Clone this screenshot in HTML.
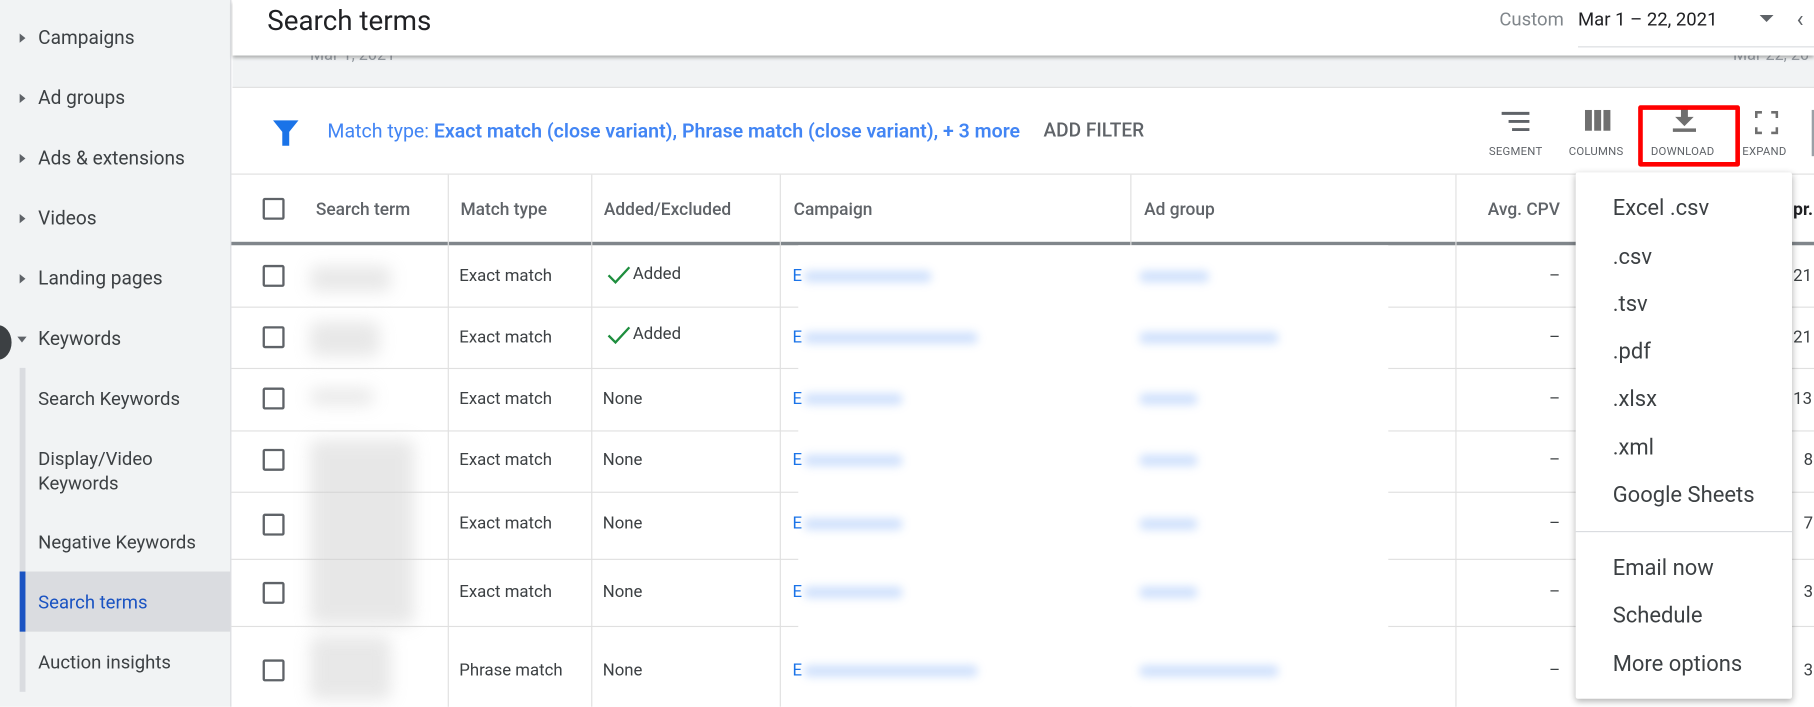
<!DOCTYPE html>
<html><head><meta charset="utf-8"><style>
*{box-sizing:border-box;margin:0;padding:0}
body{width:1814px;height:707px;overflow:hidden;background:#fff;font-family:Roboto,"Liberation Sans",Arial,sans-serif;}
#w{position:absolute;left:0;top:0;width:1568px;height:611px;transform:scale(1.15689);transform-origin:0 0;background:#fff;overflow:hidden}
.a{position:absolute}
.side{left:0;top:0;width:200px;height:611px;background:#f1f3f4;border-right:1px solid #dadce0}
.nav{position:absolute;left:33px;font-size:16.5px;color:#3c4043}
.tri{position:absolute;left:17px;width:0;height:0;border-top:4px solid transparent;border-bottom:4px solid transparent;border-left:5px solid #5f6368}
.sub{position:absolute;left:33px;font-size:16px;color:#3c4043;line-height:21px}
.t{position:absolute;font-size:14.5px;color:#3c4043}
.hd{position:absolute;font-size:15px;color:#5f6368;font-weight:500}
.cb{position:absolute;left:227px;width:19px;height:19px;border:2px solid #5f6368;border-radius:2px}
.hl{position:absolute;left:200px;width:1368px;height:1px;background:#e0e0e0}
.vl{position:absolute;top:151px;width:1px;height:460px;background:#e0e0e0}
.blur{position:absolute;background:#ccc;filter:blur(7px);border-radius:6px;opacity:.45}
.bl{position:absolute;background:#8ab4f8;filter:blur(4px);opacity:.4;height:10px;border-radius:4px}
.mi{position:absolute;left:1394px;font-size:19px;color:#3c4043}
.ic{position:absolute;font-size:9.8px;color:#5f6368;letter-spacing:.2px}
</style></head><body><div id="w">
<div class="a side"></div>
<div class="tri" style="top:29px"></div><div class="nav" style="top:24px">Campaigns</div>
<div class="tri" style="top:81px"></div><div class="nav" style="top:76px">Ad groups</div>
<div class="tri" style="top:133px"></div><div class="nav" style="top:128px">Ads &amp; extensions</div>
<div class="tri" style="top:185px"></div><div class="nav" style="top:180px">Videos</div>
<div class="tri" style="top:237px"></div><div class="nav" style="top:232px">Landing pages</div>
<div class="a" style="left:15px;top:291px;border-left:4px solid transparent;border-right:4px solid transparent;border-top:5px solid #5f6368"></div>
<div class="nav" style="top:284px">Keywords</div>
<div class="a" style="left:-14px;top:281px;width:24px;height:30px;border-radius:50%;background:#3c4043"></div>
<div class="a" style="left:17px;top:318px;width:5px;height:280px;background:#dadce0"></div>
<div class="sub" style="top:334px">Search Keywords</div>
<div class="sub" style="top:386px">Display/Video<br>Keywords</div>
<div class="sub" style="top:458px">Negative Keywords</div>
<div class="a" style="left:17px;top:494px;width:182px;height:52px;background:#dadce0;border-left:5px solid #1a53c2"></div>
<div class="sub" style="top:510px;color:#1a53c2">Search terms</div>
<div class="sub" style="top:562px">Auction insights</div>

<div class="a" style="left:201px;top:48px;width:1367px;height:28px;background:#f1f3f4;border-bottom:1px solid #e0e0e0"></div>
<div class="a" style="left:268px;top:40px;font-size:14px;color:#9aa0a6">Mar 1, 2021</div>
<div class="a" style="left:1498px;top:40px;font-size:14px;color:#9aa0a6">Mar 22, 20</div>
<div class="a" style="left:201px;top:0;width:1367px;height:48px;background:#fff;box-shadow:0 2px 3px rgba(0,0,0,.3)"></div>
<div class="a" style="left:231px;top:4px;font-size:24px;color:#202124">Search terms</div>
<div class="a" style="left:1296px;top:7px;font-size:16px;color:#80868b">Custom</div>
<div class="a" style="left:1364px;top:7px;font-size:16px;color:#202124">Mar 1 – 22, 2021</div>
<div class="a" style="left:1364px;top:40px;width:207px;height:1px;background:#dadce0"></div>
<div class="a" style="left:1521px;top:13px;border-left:6px solid transparent;border-right:6px solid transparent;border-top:6px solid #5f6368"></div>
<div class="a" style="left:1553px;top:4px;font-size:20px;color:#5f6368">‹</div>

<svg class="a" style="left:235px;top:103px" width="24" height="24" viewBox="0 0 24 24"><path d="M1 1h22l-8 10v12h-6V11z" fill="#1a73e8"/></svg>
<div class="a" style="left:283px;top:104px;font-size:16.9px;color:#4285f4">Match type: <b style="font-weight:600">Exact match (close variant), Phrase match (close variant), + 3 more</b></div>
<div class="a" style="left:902px;top:104px;font-size:16.5px;color:#5f6368;font-weight:500">ADD FILTER</div>

<svg class="a" style="left:1297px;top:95px" width="26" height="22" viewBox="0 0 26 22"><path d="M1 3h24M7 10h18M10 17h15" stroke="#5f6368" stroke-width="2.5"/></svg>
<div class="ic" style="left:1287px;top:126px">SEGMENT</div>
<svg class="a" style="left:1370px;top:95px" width="24" height="20"><rect x="0" y="0" width="6" height="18" fill="#6f6f6f"/><rect x="8" y="0" width="6" height="18" fill="#6f6f6f"/><rect x="16" y="0" width="6" height="18" fill="#6f6f6f"/></svg>
<div class="ic" style="left:1356px;top:126px">COLUMNS</div>
<svg class="a" style="left:1445px;top:94px" width="24" height="22"><path d="M8 0h6v7h5l-8 8-8-8h5z" fill="#6f6f6f"/><rect x="1" y="17" width="20" height="3" fill="#6f6f6f"/></svg>
<div class="ic" style="left:1427px;top:126px">DOWNLOAD</div>
<div class="a" style="left:1416px;top:91px;width:88px;height:53px;border:4px solid #f00;border-radius:2px"></div>
<svg class="a" style="left:1517px;top:96px" width="20" height="20"><path d="M1 6V1h5M14 1h5v5M19 14v5h-5M6 19H1v-5" stroke="#6f6f6f" stroke-width="2.4" fill="none"/></svg>
<div class="ic" style="left:1506px;top:126px">EXPAND</div>
<div class="a" style="left:1566px;top:95px;width:2px;height:40px;background:#9aa0a6"></div>

<div class="hl" style="top:150px"></div>
<div class="a" style="left:200px;top:209px;width:1368px;height:3px;background:#80868b"></div>
<div class="hl" style="top:265px"></div><div class="hl" style="top:318px"></div><div class="hl" style="top:372px"></div><div class="hl" style="top:425px"></div><div class="hl" style="top:483px"></div><div class="hl" style="top:541px"></div>
<div class="vl" style="left:387px"></div><div class="vl" style="left:511px"></div><div class="vl" style="left:674px"></div><div class="vl" style="left:977px"></div><div class="vl" style="left:1258px"></div>

<div class="cb" style="top:171px"></div>
<div class="hd" style="left:273px;top:172px">Search term</div>
<div class="hd" style="left:398px;top:172px">Match type</div>
<div class="hd" style="left:522px;top:172px">Added/Excluded</div>
<div class="hd" style="left:686px;top:172px">Campaign</div>
<div class="hd" style="left:989px;top:172px">Ad group</div>
<div class="hd" style="left:1286px;top:172px">Avg. CPV</div>
<div class="hd" style="left:1550px;top:172px;color:#202124;font-weight:700">pr.</div>

<div class="cb" style="top:229px"></div><div class="cb" style="top:282px"></div><div class="cb" style="top:335px"></div><div class="cb" style="top:388px"></div><div class="cb" style="top:444px"></div><div class="cb" style="top:503px"></div><div class="cb" style="top:570px"></div>
<div class="blur" style="left:268px;top:230px;width:70px;height:22px"></div>
<div class="blur" style="left:268px;top:278px;width:60px;height:30px"></div>
<div class="blur" style="left:268px;top:336px;width:55px;height:14px"></div>
<div class="blur" style="left:268px;top:380px;width:90px;height:160px"></div>
<div class="blur" style="left:268px;top:550px;width:70px;height:55px"></div>

<div class="t" style="left:397px;top:230px">Exact match</div>
<div class="t" style="left:397px;top:283px">Exact match</div>
<div class="t" style="left:397px;top:336px">Exact match</div>
<div class="t" style="left:397px;top:389px">Exact match</div>
<div class="t" style="left:397px;top:444px">Exact match</div>
<div class="t" style="left:397px;top:503px">Exact match</div>
<div class="t" style="left:397px;top:571px">Phrase match</div>
<svg class="a" style="left:525px;top:230px" width="20" height="16"><path d="M1 8l6 6L19 1" stroke="#1e8e3e" stroke-width="2" fill="none"/></svg>
<div class="t" style="left:547px;top:228px">Added</div>
<svg class="a" style="left:525px;top:282px" width="20" height="16"><path d="M1 8l6 6L19 1" stroke="#1e8e3e" stroke-width="2" fill="none"/></svg>
<div class="t" style="left:547px;top:280px">Added</div>
<div class="t" style="left:521px;top:336px">None</div><div class="t" style="left:521px;top:389px">None</div><div class="t" style="left:521px;top:444px">None</div><div class="t" style="left:521px;top:503px">None</div><div class="t" style="left:521px;top:571px">None</div>

<div class="a" style="left:690px;top:212px;width:510px;height:399px;background:#fff"></div>
<div class="t" style="left:685px;top:230px;color:#1a73e8">E</div><div class="t" style="left:685px;top:283px;color:#1a73e8">E</div><div class="t" style="left:685px;top:336px;color:#1a73e8">E</div><div class="t" style="left:685px;top:389px;color:#1a73e8">E</div><div class="t" style="left:685px;top:444px;color:#1a73e8">E</div><div class="t" style="left:685px;top:503px;color:#1a73e8">E</div><div class="t" style="left:685px;top:571px;color:#1a73e8">E</div>
<div class="bl" style="left:695px;top:234px;width:110px"></div><div class="bl" style="left:695px;top:287px;width:150px"></div><div class="bl" style="left:695px;top:340px;width:85px"></div><div class="bl" style="left:695px;top:393px;width:85px"></div><div class="bl" style="left:695px;top:448px;width:85px"></div><div class="bl" style="left:695px;top:507px;width:85px"></div><div class="bl" style="left:695px;top:575px;width:150px"></div>
<div class="bl" style="left:985px;top:234px;width:60px"></div><div class="bl" style="left:985px;top:287px;width:120px"></div><div class="bl" style="left:985px;top:340px;width:50px"></div><div class="bl" style="left:985px;top:393px;width:50px"></div><div class="bl" style="left:985px;top:448px;width:50px"></div><div class="bl" style="left:985px;top:507px;width:50px"></div><div class="bl" style="left:985px;top:575px;width:120px"></div>

<div class="t" style="left:1339px;top:230px">–</div><div class="t" style="left:1339px;top:283px">–</div><div class="t" style="left:1339px;top:336px">–</div><div class="t" style="left:1339px;top:389px">–</div><div class="t" style="left:1339px;top:444px">–</div><div class="t" style="left:1339px;top:503px">–</div><div class="t" style="left:1339px;top:571px">–</div>
<div class="t" style="left:1550px;top:230px">21</div><div class="t" style="left:1550px;top:283px">21</div><div class="t" style="left:1550px;top:336px">13</div><div class="t" style="left:1559px;top:389px">8</div><div class="t" style="left:1559px;top:444px">7</div><div class="t" style="left:1559px;top:503px">3</div><div class="t" style="left:1559px;top:571px">3</div>

<div class="a" style="left:1362px;top:149px;width:187px;height:455px;background:#fff;box-shadow:0 2px 6px rgba(0,0,0,.3);border-radius:2px"></div>
<div class="mi" style="top:168px">Excel .csv</div>
<div class="mi" style="top:210px">.csv</div>
<div class="mi" style="top:251px">.tsv</div>
<div class="mi" style="top:292px">.pdf</div>
<div class="mi" style="top:333px">.xlsx</div>
<div class="mi" style="top:375px">.xml</div>
<div class="mi" style="top:416px">Google Sheets</div>
<div class="a" style="left:1362px;top:459px;width:187px;height:1px;background:#dadce0"></div>
<div class="mi" style="top:479px">Email now</div>
<div class="mi" style="top:520px">Schedule</div>
<div class="mi" style="top:562px">More options</div>
</div></body></html>
